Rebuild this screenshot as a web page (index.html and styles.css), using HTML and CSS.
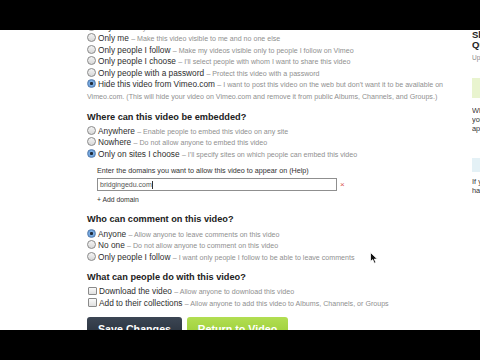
FILE: index.html
```html
<!DOCTYPE html>
<html>
<head>
    <meta charset="utf-8" />
    <title>Video Settings - Privacy</title>
    <link rel="stylesheet" href="styles.css">
</head>
<body>
    <div class="bar"></div>
    <div class="screen">
        <div class="main">
            <div class="opts first">
                <div class="opt"><span class="radio"></span>Anyone <span class="desc">&ndash; Anyone can see this video</span></div>
                <div class="opt"><span class="radio"></span>Only me <span class="desc">&ndash; Make this video visible to me and no one else</span></div>
                <div class="opt"><span class="radio"></span>Only people I follow <span class="desc">&ndash; Make my videos visible only to people I follow on Vimeo</span></div>
                <div class="opt"><span class="radio"></span>Only people I choose <span class="desc">&ndash; I'll select people with whom I want to share this video</span></div>
                <div class="opt"><span class="radio"></span>Only people with a password <span class="desc">&ndash; Protect this video with a password</span></div>
                <div class="opt"><span class="radio on"></span>Hide this video from Vimeo.com <span class="desc">&ndash; I want to post this video on the web but don't want it to be available on<br>Vimeo.com. (This will hide your video on Vimeo.com and remove it from public Albums, Channels, and Groups.)</span></div>
            </div>

            <h3 class="head">Where can this video be embedded?</h3>
            <div class="opts">
                <div class="opt"><span class="radio"></span>Anywhere <span class="desc">&ndash; Enable people to embed this video on any site</span></div>
                <div class="opt"><span class="radio"></span>Nowhere <span class="desc">&ndash; Do not allow anyone to embed this video</span></div>
                <div class="opt"><span class="radio on"></span>Only on sites I choose <span class="desc">&ndash; I'll specify sites on which people can embed this video</span></div>
            </div>
            <div class="domains">
                <div class="domains-label">Enter the domains you want to allow this video to appear on (Help)</div>
                <div class="domain-row">
                    <div class="domain-input">bridgingedu.com<span class="caret"></span></div>
                    <span class="remove">&times;</span>
                </div>
                <div class="add-domain">+ Add domain</div>
            </div>

            <h3 class="head">Who can comment on this video?</h3>
            <div class="opts">
                <div class="opt"><span class="radio on"></span>Anyone <span class="desc">&ndash; Allow anyone to leave comments on this video</span></div>
                <div class="opt"><span class="radio"></span>No one <span class="desc">&ndash; Do not allow anyone to comment on this video</span></div>
                <div class="opt"><span class="radio"></span>Only people I follow <span class="desc">&ndash; I want only people I follow to be able to leave comments</span></div>
            </div>

            <h3 class="head">What can people do with this video?</h3>
            <div class="opts">
                <div class="opt"><span class="check"></span>Download the video <span class="desc">&ndash; Allow anyone to download this video</span></div>
                <div class="opt"><span class="check"></span>Add to their collections <span class="desc">&ndash; Allow anyone to add this video to Albums, Channels, or Groups</span></div>
            </div>

            <div class="buttons">
                <div class="btn save">Save Changes</div>
                <div class="btn back">Return to Video</div>
            </div>
        </div>

        <div class="side">
            <div class="side-title">Sharing<br>Quick tips</div>
            <div class="side-sub">Updated settings</div>
            <div class="side-box green"></div>
            <div class="side-text">When you choose<br>your privacy<br>applies to all</div>
            <div class="side-box blue"></div>
            <div class="side-text short">If you<br>have</div>
        </div>

        <svg class="pointer" width="9" height="12" viewBox="0 0 9 12">
            <path d="M0.5 0.5 L0.5 9.5 L2.7 7.6 L4.3 11.2 L5.8 10.5 L4.3 7.1 L7.3 7.1 Z" fill="#111" stroke="#fff" stroke-width="0.8"/>
        </svg>
    </div>
    <div class="bar"></div>
</body>
</html>
```

FILE: styles.css
```css
body {
    margin: 0;
    width: 480px;
    height: 360px;
    overflow: hidden;
    background: #000;
    font-family: "Liberation Sans", Arial, sans-serif;
}

.bar {
    height: 30px;
    background: #000;
}

.screen {
    position: relative;
    height: 300px;
    overflow: hidden;
    background: #fff;
    display: flex;
}

.main {
    flex: 0 0 472px;
    box-sizing: border-box;
    padding-left: 87px;
}

.opts.first {
    margin-top: -8.25px;
}

.opt {
    line-height: 11.5px;
    font-size: 8.3px;
    color: #2e2e2e;
    white-space: nowrap;
}

.desc {
    font-size: 7.1px;
    line-height: 1;
    color: #8f8f8f;
}

.radio {
    display: inline-block;
    width: 7px;
    height: 7px;
    border: 0.6px solid #8a8a8a;
    border-radius: 50%;
    background: linear-gradient(#f4f4f4, #d8d8d8);
    vertical-align: -1px;
    margin-right: 2px;
}

.radio.on {
    border-color: #5a7fae;
    background: radial-gradient(circle, #1e2a3a 0, #1e2a3a 1.3px, #7fb0e4 1.8px, #4f86c6 100%);
}

.check {
    display: inline-block;
    width: 6.5px;
    height: 6.5px;
    border: 0.6px solid #8a8a8a;
    border-radius: 1px;
    background: linear-gradient(#fafafa, #e0e0e0);
    vertical-align: -1px;
    margin-left: 1px;
    margin-right: 2.5px;
}

.head {
    margin: 7.75px 0 4px;
    height: 12px;
    line-height: 12px;
    font-size: 9.2px;
    font-weight: bold;
    color: #222;
}

.opts + .domains {
    margin-top: 4.7px;
}

.domains {
    padding-left: 10px;
}

.domains-label {
    height: 11px;
    line-height: 11px;
    font-size: 7.2px;
    color: #333;
}

.domain-row {
    margin-top: 2.8px;
    height: 13px;
    display: flex;
    align-items: center;
}

.domain-input {
    box-sizing: border-box;
    width: 240px;
    height: 13px;
    border: 1px solid #8f8f8f;
    line-height: 11px;
    font-size: 7px;
    color: #555;
    padding-left: 2px;
}

.caret {
    display: inline-block;
    width: 0.6px;
    height: 8px;
    background: #333;
    vertical-align: -1.5px;
}

.remove {
    margin-left: 3px;
    font-size: 8px;
    line-height: 1;
    color: #d9534f;
}

.add-domain {
    margin-top: 2.5px;
    height: 11px;
    line-height: 11px;
    font-size: 6.8px;
    color: #333;
}

.domains + .head {
    margin-top: 8px;
    margin-bottom: 3.75px;
}

.opts + .head {
    margin-top: 8.25px;
    margin-bottom: 3px;
}

.buttons {
    margin-top: 8px;
    display: flex;
    gap: 5px;
}

.btn {
    height: 22px;
    line-height: 22px;
    border-radius: 3px;
    font-size: 10.7px;
    font-weight: bold;
    color: #fff;
    text-align: center;
    padding-top: 1px;
}

.save {
    width: 95px;
    background: linear-gradient(#3c4654, #262e38);
}

.back {
    width: 101px;
    background: linear-gradient(#b2de52, #97cb33);
}

.side {
    flex: 1;
    min-width: 0;
    overflow: hidden;
    white-space: nowrap;
}

.side-title {
    line-height: 10px;
    font-size: 9.5px;
    font-weight: bold;
    color: #222;
}

.side-sub {
    margin-top: 2.5px;
    line-height: 9px;
    font-size: 6.5px;
    color: #8a8a8a;
}

.side-box {
    width: 60px;
}

.side-box.green {
    margin-top: 16.5px;
    height: 20px;
    background: #e9f4cf;
}

.side-box.blue {
    margin-top: 25.5px;
    height: 14px;
    background: #e4f1f6;
}

.side-text {
    margin-top: 7.5px;
    line-height: 9px;
    font-size: 7.4px;
    color: #333;
}

.side-text.short {
    margin-top: 4.5px;
}

.pointer {
    position: absolute;
    left: 370px;
    top: 222px;
}
```
